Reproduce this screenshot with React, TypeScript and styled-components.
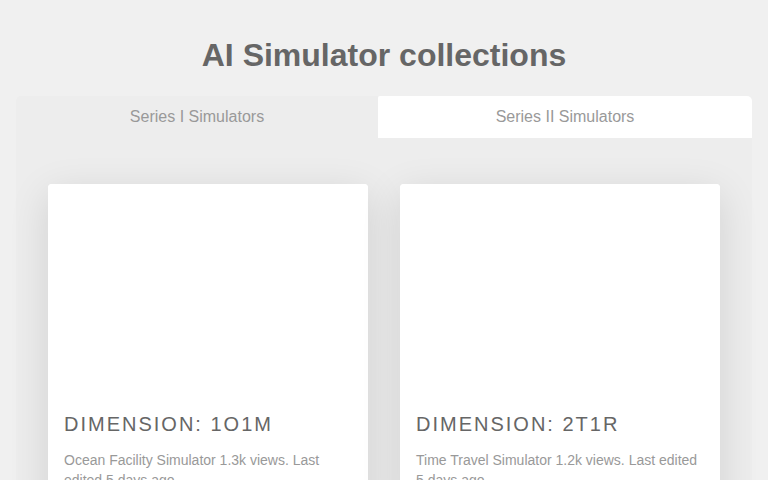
import React, { useState } from "react";
import styled, { createGlobalStyle } from "styled-components";

// === Global styles ===

const GlobalStyle = createGlobalStyle`
  body {
    margin: 0;
    background-color: #f0f0f0;
    font-family: "Liberation Sans", Arial, sans-serif;
  }
`;

// === Layout ===

const Page = styled.main`
  padding: 37px 16px 40px;
`;

const Title = styled.h1`
  margin: 0 0 22px;
  font-size: 32px;
  line-height: 37px;
  font-weight: 700;
  color: #666666;
  text-align: center;
`;

const TabList = styled.div`
  display: grid;
  grid-template-columns: 362px 1fr;
  height: 42px;
`;

const Tab = styled.button<{ $active: boolean }>`
  border: none;
  margin: 0;
  padding: 0;
  font-family: inherit;
  font-size: 16px;
  color: #999999;
  cursor: pointer;
  background-color: ${(p) => (p.$active ? "#ededed" : "#ffffff")};
  border-radius: ${(p) => (p.$active ? "5px 0 0 0" : "2px 5px 0 0")};
`;

const Panel = styled.section`
  background-color: #ededed;
  padding: 46px 32px 32px;
  border-radius: 0 0 5px 5px;
`;

const CardGrid = styled.div`
  display: grid;
  grid-template-columns: repeat(2, 320px);
  gap: 32px;
`;

const Card = styled.article`
  background-color: #ffffff;
  border-radius: 4px;
  box-shadow: 0 10px 40px rgba(0, 0, 0, 0.12);
  overflow: hidden;
`;

const Media = styled.div`
  height: 229px;
  background-color: #ffffff;
`;

const CardBody = styled.div`
  padding: 0 16px 20px;
`;

const CardTitle = styled.h2`
  margin: 0 0 14px;
  font-size: 20px;
  line-height: 23px;
  font-weight: 400;
  letter-spacing: 2px;
  color: #666666;
`;

const CardText = styled.p`
  margin: 0;
  font-size: 14px;
  line-height: 20px;
  color: #999999;
`;

// === Data ===

const series = [
  {
    label: "Series I Simulators",
    cards: [
      {
        title: "DIMENSION: 1O1M",
        text: "Ocean Facility Simulator 1.3k views. Last edited 5 days ago",
      },
      {
        title: "DIMENSION: 2T1R",
        text: "Time Travel Simulator 1.2k views. Last edited 5 days ago",
      },
    ],
  },
  {
    label: "Series II Simulators",
    cards: [
      {
        title: "DIMENSION: 3S2K",
        text: "Space Station Simulator 980 views. Last edited 2 days ago",
      },
      {
        title: "DIMENSION: 4D2X",
        text: "Desert Outpost Simulator 860 views. Last edited 1 week ago",
      },
    ],
  },
];

const App: React.FC = () => {
  const [active, setActive] = useState(0);

  return (
    <Page>
      <GlobalStyle />
      <Title>AI Simulator collections</Title>
      <TabList>
        {series.map((s, i) => (
          <Tab key={s.label} $active={active === i} onClick={() => setActive(i)}>
            {s.label}
          </Tab>
        ))}
      </TabList>
      <Panel>
        <CardGrid>
          {series[active].cards.map((c) => (
            <Card key={c.title}>
              <Media />
              <CardBody>
                <CardTitle>{c.title}</CardTitle>
                <CardText>{c.text}</CardText>
              </CardBody>
            </Card>
          ))}
        </CardGrid>
      </Panel>
    </Page>
  );
};

export default App;
